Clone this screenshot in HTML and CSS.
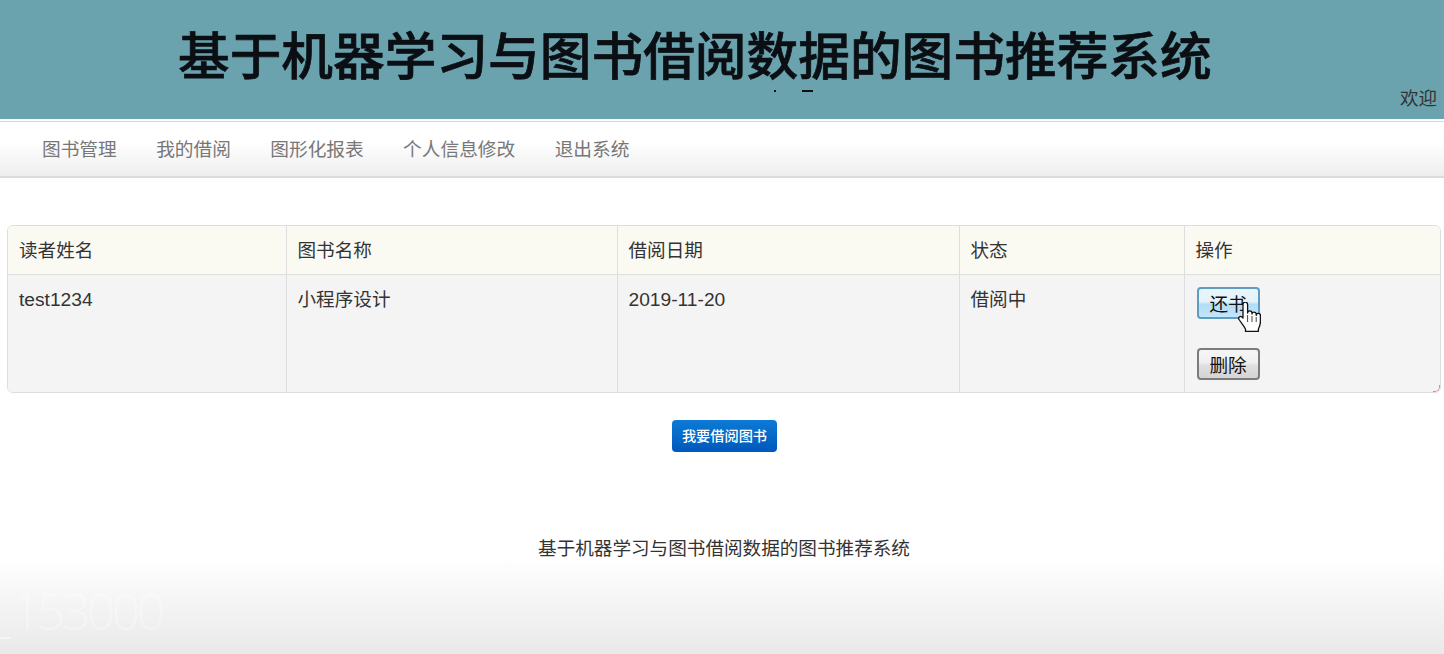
FILE: index.html
```html
<!DOCTYPE html>
<html lang="zh">
<head>
<meta charset="utf-8">
<title>基于机器学习与图书借阅数据的图书推荐系统</title>
<link rel="stylesheet" href="styles.css">
</head>
<body>
<header class="banner">
  <h1 class="banner-title">基于机器学习与图书借阅数据的图书推荐系统</h1>
  <span class="banner-dot dot-a"></span>
  <span class="banner-dot dot-b"></span>
  <span class="welcome">欢迎</span>
</header>
<nav class="nav">
  <a class="nav-item">图书管理</a>
  <a class="nav-item">我的借阅</a>
  <a class="nav-item">图形化报表</a>
  <a class="nav-item">个人信息修改</a>
  <a class="nav-item">退出系统</a>
</nav>
<main class="content">
  <div class="table-wrap">
    <table class="grid">
      <colgroup>
        <col class="c1"><col class="c2"><col class="c3"><col class="c4"><col class="c5">
      </colgroup>
      <thead>
        <tr><th>读者姓名</th><th>图书名称</th><th>借阅日期</th><th>状态</th><th>操作</th></tr>
      </thead>
      <tbody>
        <tr>
          <td class="latin">test1234</td>
          <td>小程序设计</td>
          <td class="latin">2019-11-20</td>
          <td>借阅中</td>
          <td class="actions">
            <span class="btn-holder">
              <button class="btn btn-hover">还书</button>
              <svg class="hand" viewBox="0 0 23 30" width="23" height="30" aria-hidden="true">
                <path d="M5 2.500a2.300 2.300 0 0 1 4.600 0V11a2.200 2.200 0 0 1 4.400 0v1a2.100 2.100 0 0 1 4.200.3v1a2.100 2.100 0 0 1 4.200.5V20c0 3-1 5-2 7v2.500H7.500V27C5.500 23 3 20.500 1 17.500c-1.300-2 1-4 3-2.500l1 1z" fill="#fff" stroke="#111" stroke-width="1.300" stroke-linejoin="round"/>
                <path d="M9.600 13v7M14 14v6M18.200 15v5" stroke="#444" stroke-width="1" fill="none"/>
              </svg>
            </span>
            <button class="btn btn-plain">删除</button>
          </td>
        </tr>
      </tbody>
    </table>
  </div>
  <div class="cta-row"><button class="cta">我要借阅图书</button></div>
</main>
<footer class="footer">
  <p class="footer-text">基于机器学习与图书借阅数据的图书推荐系统</p>
  <div class="watermark">153000</div>
  <span class="watermark-dash"></span>
</footer>
</body>
</html>
```
FILE: styles.css
```css
* { box-sizing: border-box; }
html, body { margin: 0; padding: 0; }
body {
  width: 1444px;
  height: 654px;
  overflow: hidden;
  background: #fff;
  font-family: "Liberation Sans", "Noto Sans CJK SC", sans-serif;
  color: #333;
}
.banner {
  position: relative;
  height: 119px;
  background: #6aa3ae;
  padding: 23px 0 0 178px;
}
.banner-title {
  margin: 0;
  font-size: 51.700px;
  line-height: 60px;
  font-weight: 500;
  color: #0b0f14;
  -webkit-text-stroke: 0.7px #0b0f14;
  font-family: "Noto Sans CJK SC", sans-serif;
  white-space: nowrap;
}
.banner-dot { position: absolute; background: #111; height: 2px; top: 90px; }
.dot-a { left: 774px; width: 2px; }
.dot-b { left: 802px; width: 11px; }
.welcome {
  position: absolute;
  right: 7px;
  top: 86px;
  font-size: 18.500px;
  line-height: 26px;
  color: #333;
}
.nav {
  margin-top: 2px;
  height: 57px;
  display: flex;
  gap: 39.400px;
  align-items: center;
  padding: 0 0 3px 42px;
  background: linear-gradient(#fff, #fff 35%, #eeeeee);
  border-top: 1px solid #d8d8d8;
  border-bottom: 2px solid #dcdcdc;
}
.nav-item { font-size: 18.700px; color: #777; white-space: nowrap; }
.content { padding: 47px 3px 0 7px; }
.table-wrap {
  position: relative;
  width: 1434px;
  height: 168px;
  border: 1px solid #dedede;
  border-radius: 6px;
  overflow: hidden;
}
.table-wrap::after {
  content: "";
  position: absolute;
  right: 0;
  bottom: 0;
  width: 6px;
  height: 6px;
  border-right: 1.500px solid #e8808f;
  border-bottom: 1.500px solid #e8808f;
  border-bottom-right-radius: 5px;
}
.grid {
  width: 1432px;
  height: 166px;
  border-collapse: collapse;
  table-layout: fixed;
  font-size: 18.600px;
}
.c1 { width: 278px; }
.c2 { width: 331px; }
.c3 { width: 342px; }
.c4 { width: 225px; }
.c5 { width: 256px; }
.grid th, .grid td {
  border-left: 1px solid #dedede;
  padding: 0 11px;
  text-align: left;
  vertical-align: top;
}
.grid th:first-child, .grid td:first-child { border-left: 0; }
.grid th {
  height: 48px;
  background: #fafaf3;
  font-weight: 400;
  padding-top: 1px;
  line-height: 47px;
  border-bottom: 1px solid #dedede;
  color: #333;
}
.grid td {
  background: #f4f4f4;
  padding-top: 13px;
  line-height: 24px;
  color: #333;
}
.grid td.latin { font-size: 19.200px; }
.grid td.actions { padding: 12px 0 0 12px; line-height: 0; }
.btn-holder { position: relative; display: block; width: 63px; height: 32px; margin-bottom: 29px; }
.btn {
  display: block;
  width: 63px;
  height: 32px;
  padding: 0 0 4px;
  border-radius: 4px;
  font-size: 18.600px;
  font-family: inherit;
  color: #111;
}
.btn-hover {
  border: 2px solid #5f9cc0;
  background: linear-gradient(#e9f5fc 0, #e4f2fb 45%, #b3ddf7 55%, #c3e5f9 100%);
}
.btn-plain {
  border: 2px solid #7c7c7c;
  background: linear-gradient(#f6f6f6 0, #efefef 45%, #dfdfdf 55%, #d4d4d4 100%);
}
.hand { position: absolute; left: 41px; top: 15px; }
.cta-row { display: flex; justify-content: center; margin-top: 27px; padding-left: 1px; }
.cta {
  width: 105px;
  height: 32px;
  padding: 0 0 2px;
  border: 0;
  border-radius: 4px;
  background: linear-gradient(#0c7ad6, #0058bb);
  color: #fff;
  font-size: 14.200px;
  font-weight: 500;
  font-family: inherit;
}
.footer {
  position: relative;
  height: 203px;
  background: linear-gradient(#fff, #fff 52%, #f5f5f5 73%, #e9e9e9);
}
.footer-text {
  margin: 0;
  padding: 84px 0 0 4px;
  text-align: center;
  font-size: 18.600px;
  line-height: 26px;
  color: #333;
}
.watermark {
  position: absolute;
  left: 12px;
  top: 129px;
  font-family: "Open Sans", sans-serif;
  font-weight: 300;
  font-size: 50px;
  letter-spacing: -3.600px;
  line-height: 60px;
  color: rgba(255, 255, 255, 0.3);
}
.watermark-dash {
  position: absolute;
  left: 0;
  top: 185px;
  width: 11px;
  height: 2px;
  background: #f5f5f5;
}
```
